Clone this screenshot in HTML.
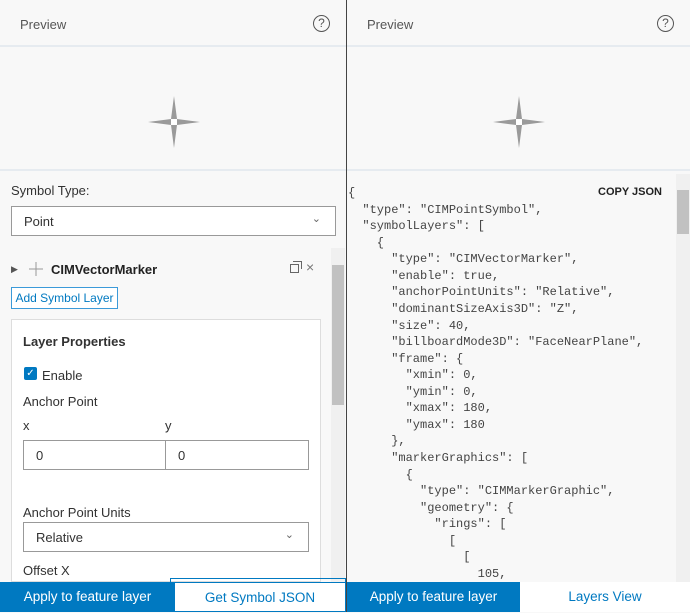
<!DOCTYPE html>
<html><head><style>
*{box-sizing:border-box;margin:0;padding:0}
body{width:690px;height:612px;overflow:hidden;background:#f8f8f8;font-family:"Liberation Sans",sans-serif;color:#323232;position:relative}
.panel{position:absolute;top:0;height:582px;background:#f8f8f8;overflow:hidden}
.hdr{position:absolute;left:0;right:0;top:0;height:47px;border-bottom:2px solid #e6ebf0}
.hdr span{position:absolute;left:20px;top:17px;font-size:13px;color:#555}
.help{position:absolute;right:16px;top:15px;width:17px;height:17px;border:1.3px solid #555;border-radius:50%;font-size:12px;text-align:center;line-height:15px;color:#555}
.prev{position:absolute;left:0;right:0;top:49px;height:122px;border-bottom:2px solid #e6ebf0}
.star{position:absolute;top:47px;}
.bar{position:absolute;top:582px;height:30px;background:#0079c1;color:#fff;font-size:13.5px}
.bar div{position:absolute;top:0;height:30px;line-height:30px;text-align:center}
pre{position:absolute;left:1px;top:185px;font-family:"Liberation Mono",monospace;font-size:12px;line-height:16.57px;color:#444}
</style></head><body>
<div class="panel" style="left:0;width:346px">
 <div class="hdr"><span>Preview</span><div class="help">?</div></div>
 <div class="prev"><svg class="star" style="left:148px" width="52" height="52" viewBox="0 0 52 52"><path d="M26 0L29 23L52 26L29 29L26 52L23 29L0 26L23 23Z" fill="#9a9a9a"/><rect x="23" y="23" width="6" height="6" fill="#fff"/></svg></div>
 <div style="position:absolute;left:11px;top:183px;font-size:13px">Symbol Type:</div>
 <div style="position:absolute;left:11px;top:206px;width:325px;height:30px;border:1px solid #999;background:#fff;font-size:13px;padding:7px 12px">Point<span style="position:absolute;right:14px;top:5px;font-size:11px;color:#666">&#8964;</span></div>
 <div style="position:absolute;left:11px;top:264px;font-size:9px;color:#555">&#9654;</div>
 <svg style="position:absolute;left:27px;top:260px" width="18" height="18"><path d="M9 2v14M2 9h14" stroke="#999" stroke-width="1"/></svg>
 <div style="position:absolute;left:51px;top:262px;font-size:13px;font-weight:bold;color:#222">CIMVectorMarker</div>
 <div style="position:absolute;left:290px;top:264px;width:9px;height:9px;border:1px solid #666;background:#f8f8f8"></div>
 <div style="position:absolute;left:293px;top:261px;width:9px;height:8px;border-top:1px solid #666;border-right:1px solid #666"></div>
 <div style="position:absolute;left:306px;top:259px;font-size:14px;color:#777">×</div>
 <div style="position:absolute;left:11px;top:287px;width:107px;height:22px;border:1px solid #3b9ad9;background:#fff;color:#0079c1;font-size:12px;text-align:center;line-height:20px">Add Symbol Layer</div>
 <div style="position:absolute;left:331px;top:248px;width:14px;height:334px;background:#f0f0f0"><div style="position:absolute;left:1px;top:17px;width:12px;height:140px;background:#c1c1c1"></div></div>
 <div style="position:absolute;left:11px;top:319px;width:310px;height:263px;border:1px solid #ddd;background:#fff;font-size:13px">
  <div style="position:absolute;left:11px;top:14px;font-weight:bold">Layer Properties</div>
  <div style="position:absolute;left:12px;top:47px;width:13px;height:13px;background:#0079c1;border-radius:2px;color:#fff;font-size:10px;text-align:center;line-height:13px">✓</div>
  <div style="position:absolute;left:30px;top:48px">Enable</div>
  <div style="position:absolute;left:11px;top:74px">Anchor Point</div>
  <div style="position:absolute;left:11px;top:98px">x</div>
  <div style="position:absolute;left:153px;top:98px">y</div>
  <div style="position:absolute;left:11px;top:120px;width:143px;height:30px;border:1px solid #999;padding:7px 12px">0</div>
  <div style="position:absolute;left:153px;top:120px;width:144px;height:30px;border:1px solid #999;padding:7px 12px">0</div>
  <div style="position:absolute;left:11px;top:185px">Anchor Point Units</div>
  <div style="position:absolute;left:11px;top:202px;width:286px;height:30px;border:1px solid #999;padding:7px 12px">Relative<span style="position:absolute;right:14px;top:5px;font-size:11px;color:#666">&#8964;</span></div>
  <div style="position:absolute;left:11px;top:243px">Offset X</div>
 </div>
 <div style="position:absolute;left:170px;top:578px;width:176px;height:4px;border:1px solid #0079c1;border-bottom:none"></div>
</div>
<div style="position:absolute;left:346px;top:0;width:1px;height:612px;background:#444"></div>
<div class="panel" style="left:347px;width:343px">
 <div class="hdr"><span>Preview</span><div class="help">?</div></div>
 <div class="prev"><svg class="star" style="left:146px" width="52" height="52" viewBox="0 0 52 52"><path d="M26 0L29 23L52 26L29 29L26 52L23 29L0 26L23 23Z" fill="#9a9a9a"/><rect x="23" y="23" width="6" height="6" fill="#fff"/></svg></div>
 <div style="position:absolute;left:329px;top:174px;width:14px;height:408px;background:#f0f0f0"><div style="position:absolute;left:1px;top:16px;width:12px;height:44px;background:#c1c1c1"></div></div>
<pre>{
  "type": "CIMPointSymbol",
  "symbolLayers": [
    {
      "type": "CIMVectorMarker",
      "enable": true,
      "anchorPointUnits": "Relative",
      "dominantSizeAxis3D": "Z",
      "size": 40,
      "billboardMode3D": "FaceNearPlane",
      "frame": {
        "xmin": 0,
        "ymin": 0,
        "xmax": 180,
        "ymax": 180
      },
      "markerGraphics": [
        {
          "type": "CIMMarkerGraphic",
          "geometry": {
            "rings": [
              [
                [
                  105,
                  105</pre>
 <div style="position:absolute;left:251px;top:186px;font-size:11px;font-weight:bold;color:#222">COPY JSON</div>
</div>
<div class="bar" style="left:0;width:346px"><div style="left:0;width:175px">Apply to feature layer</div><div style="left:175px;width:170px;background:#fff;color:#0079c1;top:1px;height:28px">Get Symbol JSON</div></div>
<div class="bar" style="left:347px;width:343px"><div style="left:0;width:173px">Apply to feature layer</div><div style="left:173px;width:170px;background:#fff;color:#0079c1">Layers View</div></div>
</body></html>
